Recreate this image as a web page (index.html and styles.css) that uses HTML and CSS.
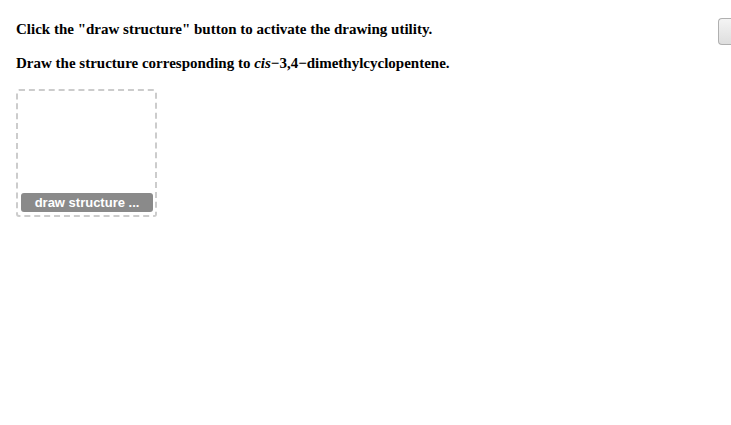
FILE: index.html
```html
<!DOCTYPE html>
<html>
<head>
<meta charset="utf-8">
<link rel="stylesheet" href="styles.css">
</head>
<body>
<div class="page">
  <div class="main">
    <p class="line first">Click the "draw structure" button to activate the drawing utility.</p>
    <p class="line second">Draw the structure corresponding to <i>cis</i>&minus;3,4&minus;dimethylcyclopentene.</p>
    <div class="drawbox">
      <button class="drawbtn">draw structure ...</button>
    </div>
  </div>
  <div class="side"><div class="sidebtn"></div></div>
</div>
</body>
</html>
```
FILE: styles.css
```css
html, body { margin: 0; padding: 0; background: #fff; }
* { box-sizing: border-box; }
.page { display: flex; justify-content: space-between; width: 731px; height: 425px; overflow: hidden; }
.main { padding: 21px 0 0 16px; }
.line { margin: 0; font-family: "Liberation Serif", "Times New Roman", serif; font-weight: bold; font-size: 15px; line-height: 17px; color: #000; }
.second { margin-top: 17px; }
.drawbox { margin-top: 17px; width: 141px; height: 128px; border: 2px dashed #cccccc; border-radius: 3px; display: flex; flex-direction: column; justify-content: flex-end; padding: 0 2px 3px 3px; }
.drawbtn { width: 132px; height: 19px; background: #8a8a8a; color: #fff; border: none; border-radius: 3px; font-family: "Liberation Sans", Arial, sans-serif; font-weight: bold; font-size: 13px; padding: 0; line-height: 19px; }
.side { padding-top: 18px; }
.sidebtn { width: 13px; height: 27px; border: 1px solid #b0b0b0; border-right: none; border-radius: 4px 0 0 4px; background: linear-gradient(#f4f4f4, #dedede); }
```
